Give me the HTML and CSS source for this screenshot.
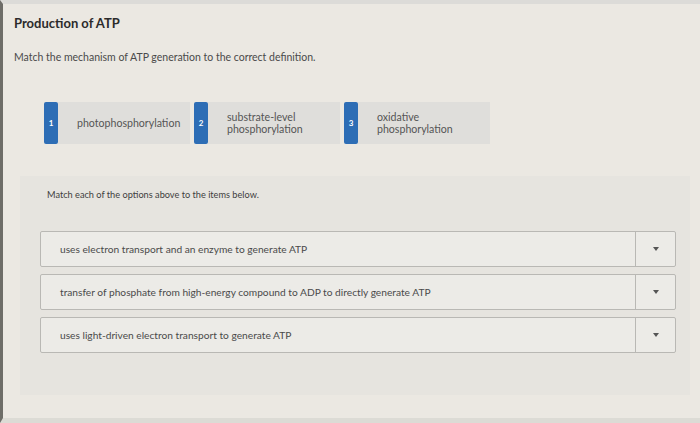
FILE: index.html
```html
<!DOCTYPE html>
<html lang="en">
<head>
<meta charset="UTF-8">
<meta name="viewport" content="width=device-width, initial-scale=1.0">
<title>Production of ATP</title>
<link rel="stylesheet" href="styles.css">
</head>
<body>
<div class="page">
  <h1 class="title">Production of ATP</h1>
  <p class="prompt">Match the mechanism of ATP generation to the correct definition.</p>

  <div class="options">
    <div class="option">
      <span class="badge">1</span>
      <span class="label">photophosphorylation</span>
    </div>
    <div class="option">
      <span class="badge">2</span>
      <span class="label">substrate-level<br>phosphorylation</span>
    </div>
    <div class="option">
      <span class="badge">3</span>
      <span class="label">oxidative<br>phosphorylation</span>
    </div>
  </div>

  <div class="match-panel">
    <p class="hint">Match each of the options above to the items below.</p>
    <div class="item">
      <span class="item-text">uses electron transport and an enzyme to generate ATP</span>
      <span class="select"><i class="caret"></i></span>
    </div>
    <div class="item">
      <span class="item-text">transfer of phosphate from high-energy compound to ADP to directly generate ATP</span>
      <span class="select"><i class="caret"></i></span>
    </div>
    <div class="item">
      <span class="item-text">uses light-driven electron transport to generate ATP</span>
      <span class="select"><i class="caret"></i></span>
    </div>
  </div>
</div>
</body>
</html>
```

FILE: styles.css
```css
html, body {
  margin: 0;
  height: 100%;
}
body {
  font-family: Lato, "Open Sans", sans-serif;
  background: #e4e2dc;
  color: #444;
}
.page {
  box-sizing: border-box;
  height: 423px;
  border-left: 3px solid #6e6d68;
  border-top: 4px solid #dcdbd8;
  border-bottom: 5px solid #dcdbd5;
  background: #ebe8e2; /* warm screen white */
  padding: 11px 20px 0 11px;
}
.title {
  margin: 0;
  font-size: 13px;
  font-weight: 700;
  color: #2b2b2b;
}
.prompt {
  margin: 20px 0 0;
  font-size: 10.5px;
  color: #4a4a4a;
}

/* numbered choices */
.options {
  display: flex;
  gap: 4px;
  margin: 39px 0 0 30px;
}
.option {
  display: flex;
  width: 146px;
  height: 42px;
}
.badge {
  width: 14px;
  flex: none;
  background: #2d6db5;
  border-radius: 2px;
  color: #fff;
  font-size: 8px;
  font-weight: 700;
  display: flex;
  align-items: center;
  justify-content: center;
}
.label {
  flex: 1;
  background: #dfdedb;
  padding: 0 0 0 19px;
  display: flex;
  align-items: center;
  font-size: 10.6px;
  line-height: 12px;
  color: #555;
}

/* matching area */
.match-panel {
  margin: 32px -10px 0 6px;
  padding: 13px 14px 0 20px;
  background: #e6e4df;
  height: 219px;
  box-sizing: border-box;
}
.hint {
  margin: 0 0 31px 7px;
  font-size: 9.2px;
  color: #3e3e3e;
}
.item {
  display: flex;
  height: 36px;
  box-sizing: border-box;
  margin-bottom: 7px;
  border: 1px solid #b9b8b4;
  border-radius: 2px;
  background: #ecebe7;
}
.item-text {
  flex: 1;
  display: flex;
  align-items: center;
  padding-left: 19px;
  font-size: 10.2px;
  color: #4a4a4a;
}
.select {
  width: 39px;
  border-left: 1px solid #b9b8b4;
  display: flex;
  align-items: center;
  justify-content: center;
}
.caret {
  width: 0;
  height: 0;
  border-left: 3px solid transparent;
  border-right: 3px solid transparent;
  border-top: 4px solid #555;
}
```
